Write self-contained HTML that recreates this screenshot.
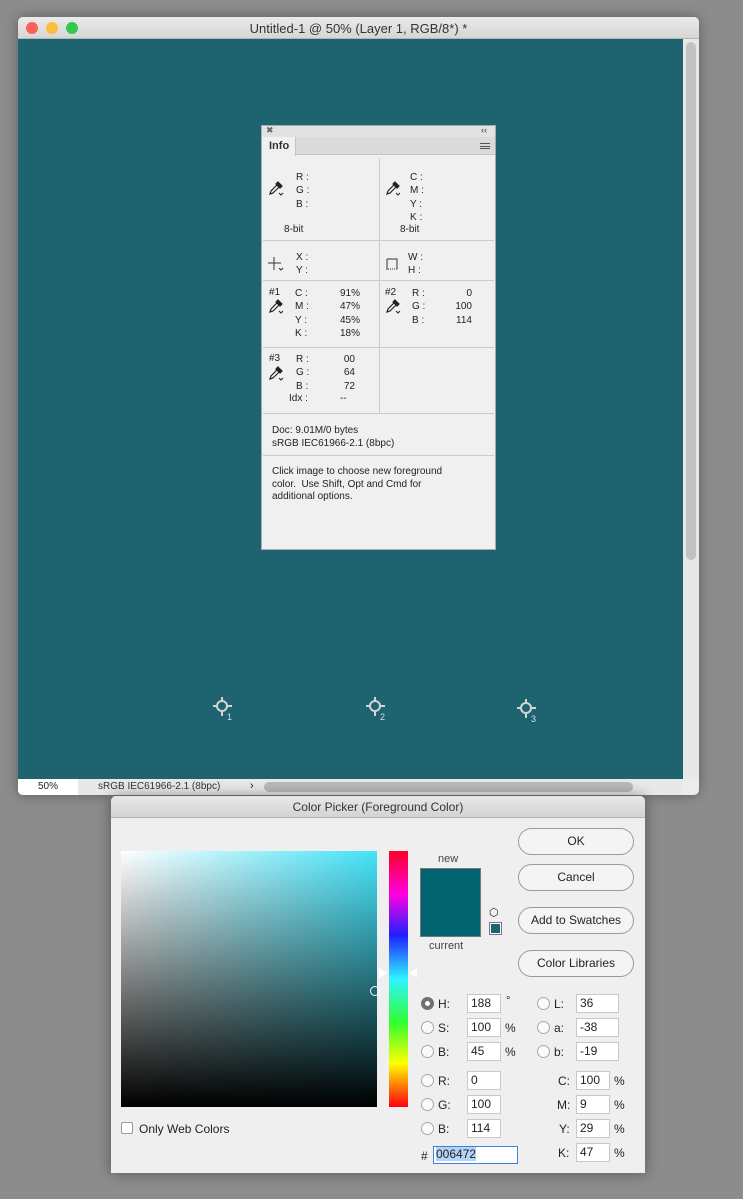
<!DOCTYPE html>
<html><head><style>
*{margin:0;padding:0;box-sizing:border-box}
body{width:743px;height:1199px;background:#8c8c8c;font-family:"Liberation Sans",sans-serif;position:relative;overflow:hidden;color:#222}
.a{position:absolute}
.t{position:absolute;font-size:10px;white-space:nowrap}
.btn{position:absolute;left:518px;width:116px;height:27px;border:1px solid #9a9a9a;border-radius:14px;background:#f4f4f4;font-size:12px;text-align:center;line-height:25px}
.rad{position:absolute;width:13px;height:13px;border:1px solid #a8a8a8;border-radius:50%;background:#fafafa}
.inp{position:absolute;height:19px;border:1px solid #c8c8c8;background:#fff;font-size:12px;padding-left:3px;line-height:17px}
.l{position:absolute;font-size:12px}
</style></head><body>
<div class="a" style="left:18px;top:17px;width:681px;height:778px;background:#ececec;border-radius:5px;box-shadow:0 0 12px rgba(0,0,0,.35)"></div>
<div class="a" style="left:18px;top:17px;width:681px;height:22px;background:linear-gradient(#ebebeb,#d6d6d6);border-radius:5px 5px 0 0;border-bottom:1px solid #b5b5b5"></div>
<div class="a" style="left:26px;top:22px;width:12px;height:12px;border-radius:50%;background:#fc605c"></div>
<div class="a" style="left:46px;top:22px;width:12px;height:12px;border-radius:50%;background:#fdbc40"></div>
<div class="a" style="left:66px;top:22px;width:12px;height:12px;border-radius:50%;background:#34c84a"></div>
<div class="t" style="left:0;width:717px;top:21px;text-align:center;font-size:13px;color:#333">Untitled-1 @ 50% (Layer 1, RGB/8*) *</div>
<div class="a" style="left:18px;top:39px;width:665px;height:740px;background:#1d6470"></div>
<div class="a" style="left:683px;top:39px;width:16px;height:740px;background:#e8e8e8"></div>
<div class="a" style="left:686px;top:42px;width:10px;height:518px;background:#c2c2c2;border-radius:5px"></div>
<div class="a" style="left:18px;top:779px;width:665px;height:16px;background:#e8e8e8;border-radius:0 0 0 5px"></div>
<div class="a" style="left:18px;top:779px;width:60px;height:16px;background:#fff;border-radius:0 0 0 5px"></div>
<div class="t" style="left:38px;top:781px;font-size:10px">50%</div>
<div class="t" style="left:98px;top:781px;font-size:10px;color:#333">sRGB IEC61966-2.1 (8bpc)</div>
<div class="t" style="left:250px;top:780px;font-size:11px">›</div>
<div class="a" style="left:264px;top:782px;width:369px;height:10px;background:#b9b9b9;border-radius:5px"></div>
<svg class="a" style="left:205px;top:690px" width="340" height="35" viewBox="0 0 340 35" fill="none" stroke="#d4d4d4" stroke-width="2">
<g transform="translate(17,16)"><circle r="5"/><path d="M0-9v4M0 5v5M-9 0h4M5 0h5"/></g>
<g transform="translate(170,16)"><circle r="5"/><path d="M0-9v4M0 5v5M-9 0h4M5 0h5"/></g>
<g transform="translate(321,18)"><circle r="5"/><path d="M0-9v4M0 5v5M-9 0h4M5 0h5"/></g>
<text x="22" y="30" fill="#ddd" stroke="none" font-size="9" font-family="Liberation Sans">1</text>
<text x="175" y="30" fill="#ddd" stroke="none" font-size="9" font-family="Liberation Sans">2</text>
<text x="326" y="32" fill="#ddd" stroke="none" font-size="9" font-family="Liberation Sans">3</text>
</svg>
<div class="a" style="left:261px;top:125px;width:235px;height:425px;background:#f0f0f0;border:1px solid #aaa"></div>
<div class="a" style="left:262px;top:126px;width:233px;height:11px;background:#e2e2e2"></div>
<div class="t" style="left:266px;top:125px;font-size:9px;color:#666">✖</div>
<div class="t" style="left:481px;top:125px;font-size:9px;color:#333">‹‹</div>
<div class="a" style="left:262px;top:137px;width:233px;height:18px;background:#dadada;border-bottom:1px solid #c4c4c4"></div>
<div class="a" style="left:262px;top:137px;width:34px;height:19px;background:#f0f0f0;border-right:1px solid #c4c4c4"></div>
<div class="t" style="left:269px;top:140px;font-size:11px;font-weight:bold;color:#333">Info</div>
<div class="a" style="left:480px;top:143px;width:10px;height:6px;border-top:1px solid #555;border-bottom:1px solid #555"></div>
<div class="a" style="left:480px;top:146px;width:10px;height:1px;background:#555"></div>
<div class="a" style="left:379px;top:158px;width:1px;height:255px;background:#ccc"></div>
<div class="a" style="left:263px;top:240px;width:231px;height:1px;background:#ccc"></div>
<div class="a" style="left:263px;top:280px;width:231px;height:1px;background:#ccc"></div>
<div class="a" style="left:263px;top:347px;width:231px;height:1px;background:#ccc"></div>
<div class="a" style="left:263px;top:413px;width:231px;height:1px;background:#ccc"></div>
<div class="a" style="left:263px;top:455px;width:231px;height:1px;background:#ccc"></div>
<div class="t" style="left:296px;top:171px;line-height:13.3px">R :<br>G :<br>B :</div>
<div class="t" style="left:284px;top:224px">8-bit</div>
<div class="t" style="left:410px;top:171px;line-height:13.3px">C :<br>M :<br>Y :<br>K :</div>
<div class="t" style="left:400px;top:224px">8-bit</div>
<div class="t" style="left:296px;top:251px;line-height:13.3px">X :<br>Y :</div>
<div class="t" style="left:408px;top:251px;line-height:13.3px">W :<br>H :</div>
<div class="t" style="left:269px;top:287px">#1</div>
<div class="t" style="left:295px;top:287px;line-height:13.3px">C :<br>M :<br>Y :<br>K :</div>
<div class="t" style="left:330px;top:287px;line-height:13.3px;width:30px;text-align:right">91%<br>47%<br>45%<br>18%</div>
<div class="t" style="left:385px;top:287px">#2</div>
<div class="t" style="left:412px;top:287px;line-height:13.3px">R :<br>G :<br>B :</div>
<div class="t" style="left:440px;top:287px;line-height:13.3px;width:32px;text-align:right">0<br>100<br>114</div>
<div class="t" style="left:269px;top:353px">#3</div>
<div class="t" style="left:296px;top:353px;line-height:13.3px">R :<br>G :<br>B :</div>
<div class="t" style="left:289px;top:393px">Idx :</div>
<div class="t" style="left:335px;top:353px;line-height:13.3px;width:20px;text-align:right">00<br>64<br>72</div>
<div class="t" style="left:340px;top:393px">--</div>
<div class="t" style="left:272px;top:425px;line-height:12.5px">Doc: 9.01M/0 bytes<br>sRGB IEC61966-2.1 (8bpc)</div>
<div class="t" style="left:272px;top:466px;line-height:12.5px">Click image to choose new foreground<br>color.&nbsp; Use Shift, Opt and Cmd for<br>additional options.</div>
<svg width="0" height="0" style="position:absolute"><defs><g id="ed"><path d="M2 14l1-3 6-6 2 2-6 6z" fill="#fff" stroke="#222" stroke-width="1.2"/><path d="M8 4l4 4M10 2l4 4-2 2-4-4z" fill="#222" stroke="#222" stroke-width="1.2"/><path d="M11 13l2 2 2-2" fill="none" stroke="#222" stroke-width="1"/></g></defs></svg>
<svg class="a" style="left:268px;top:180px" width="16" height="16"><use href="#ed"/></svg>
<svg class="a" style="left:385px;top:180px" width="16" height="16"><use href="#ed"/></svg>
<svg class="a" style="left:268px;top:298px" width="16" height="16"><use href="#ed"/></svg>
<svg class="a" style="left:385px;top:298px" width="16" height="16"><use href="#ed"/></svg>
<svg class="a" style="left:268px;top:365px" width="16" height="16"><use href="#ed"/></svg>
<svg class="a" style="left:267px;top:256px" width="18" height="16" fill="none" stroke="#333" stroke-width="1"><path d="M7 1v13M1 7h13M12 12l2 2 2-2"/></svg>
<svg class="a" style="left:385px;top:256px" width="16" height="16" fill="none" stroke="#333" stroke-width="1"><path d="M2 3h10v10M2 3v11" /><path d="M3 13h9" stroke-dasharray="1 1"/></svg>
<div class="a" style="left:111px;top:796px;width:534px;height:377px;background:#efefef;border-radius:5px 5px 0 0;box-shadow:0 0 14px rgba(0,0,0,.4)"></div>
<div class="a" style="left:111px;top:796px;width:534px;height:22px;background:linear-gradient(#e8e8e8,#d4d4d4);border-radius:5px 5px 0 0;border-bottom:1px solid #b0b0b0"></div>
<div class="t" style="left:111px;width:534px;top:800px;text-align:center;font-size:12px;color:#333">Color Picker (Foreground Color)</div>
<div class="a" style="left:121px;top:851px;width:256px;height:256px;background:linear-gradient(to bottom,rgba(0,0,0,0),#000),linear-gradient(to right,#fff,#44e2f8)"></div>
<div class="a" style="left:370px;top:986px;width:10px;height:10px;border:1px solid #fff;border-radius:50%"></div>
<div class="a" style="left:389px;top:851px;width:19px;height:256px;background:linear-gradient(#ff0026,#ff00e0 17%,#2020ff 33%,#30f4ff 50%,#30ff30 67%,#ffff00 83%,#ff0010)"></div>
<div class="a" style="left:379px;top:968px;width:0;height:0;border-top:5px solid transparent;border-bottom:5px solid transparent;border-left:8px solid #fff"></div>
<div class="a" style="left:409px;top:968px;width:0;height:0;border-top:5px solid transparent;border-bottom:5px solid transparent;border-right:8px solid #fff"></div>
<div class="l" style="left:438px;top:853px;font-size:11px;color:#444">new</div>
<div class="a" style="left:420px;top:868px;width:61px;height:69px;background:#00636e;border:1px solid #777"></div>
<div class="l" style="left:429px;top:940px;font-size:11px;color:#444">current</div>
<div class="t" style="left:489px;top:906px;font-size:11px">⬡</div>
<div class="a" style="left:489px;top:922px;width:13px;height:13px;border:1px solid #777;padding:1px;background:#fff"><div style="width:9px;height:9px;background:#1d6470"></div></div>
<div class="btn" style="top:828px">OK</div>
<div class="btn" style="top:864px">Cancel</div>
<div class="btn" style="top:907px">Add to Swatches</div>
<div class="btn" style="top:950px">Color Libraries</div>
<div class="rad" style="left:421px;top:997px;border:4px solid #707070;background:#fff"></div>
<div class="l" style="left:438px;top:997px">H:</div><div class="inp" style="left:467px;top:994px;width:34px">188</div><div class="l" style="left:506px;top:995px;font-size:11px">°</div>
<div class="rad" style="left:421px;top:1021px"></div>
<div class="l" style="left:438px;top:1021px">S:</div><div class="inp" style="left:467px;top:1018px;width:34px">100</div><div class="l" style="left:505px;top:1021px">%</div>
<div class="rad" style="left:421px;top:1045px"></div>
<div class="l" style="left:438px;top:1045px">B:</div><div class="inp" style="left:467px;top:1042px;width:34px">45</div><div class="l" style="left:505px;top:1045px">%</div>
<div class="rad" style="left:421px;top:1074px"></div>
<div class="l" style="left:438px;top:1074px">R:</div><div class="inp" style="left:467px;top:1071px;width:34px">0</div>
<div class="rad" style="left:421px;top:1098px"></div>
<div class="l" style="left:438px;top:1098px">G:</div><div class="inp" style="left:467px;top:1095px;width:34px">100</div>
<div class="rad" style="left:421px;top:1122px"></div>
<div class="l" style="left:438px;top:1122px">B:</div><div class="inp" style="left:467px;top:1119px;width:34px">114</div>
<div class="l" style="left:421px;top:1149px">#</div>
<div class="inp" style="left:433px;top:1146px;width:85px;height:18px;border:1px solid #3b82e0;padding-left:2px;line-height:15px"><span style="background:#b3d3f6">006472</span></div>
<div class="rad" style="left:537px;top:997px"></div>
<div class="l" style="left:554px;top:997px">L:</div><div class="inp" style="left:576px;top:994px;width:43px">36</div>
<div class="rad" style="left:537px;top:1021px"></div>
<div class="l" style="left:554px;top:1021px">a:</div><div class="inp" style="left:576px;top:1018px;width:43px">-38</div>
<div class="rad" style="left:537px;top:1045px"></div>
<div class="l" style="left:554px;top:1045px">b:</div><div class="inp" style="left:576px;top:1042px;width:43px">-19</div>
<div class="l" style="left:558px;top:1074px">C:</div><div class="inp" style="left:576px;top:1071px;width:34px">100</div><div class="l" style="left:614px;top:1074px">%</div>
<div class="l" style="left:557px;top:1098px">M:</div><div class="inp" style="left:576px;top:1095px;width:34px">9</div><div class="l" style="left:614px;top:1098px">%</div>
<div class="l" style="left:559px;top:1122px">Y:</div><div class="inp" style="left:576px;top:1119px;width:34px">29</div><div class="l" style="left:614px;top:1122px">%</div>
<div class="l" style="left:558px;top:1146px">K:</div><div class="inp" style="left:576px;top:1143px;width:34px">47</div><div class="l" style="left:614px;top:1146px">%</div>
<div class="a" style="left:121px;top:1122px;width:12px;height:12px;border:1px solid #999;background:#fff;border-radius:2px"></div>
<div class="l" style="left:139px;top:1122px">Only Web Colors</div>
</body></html>
